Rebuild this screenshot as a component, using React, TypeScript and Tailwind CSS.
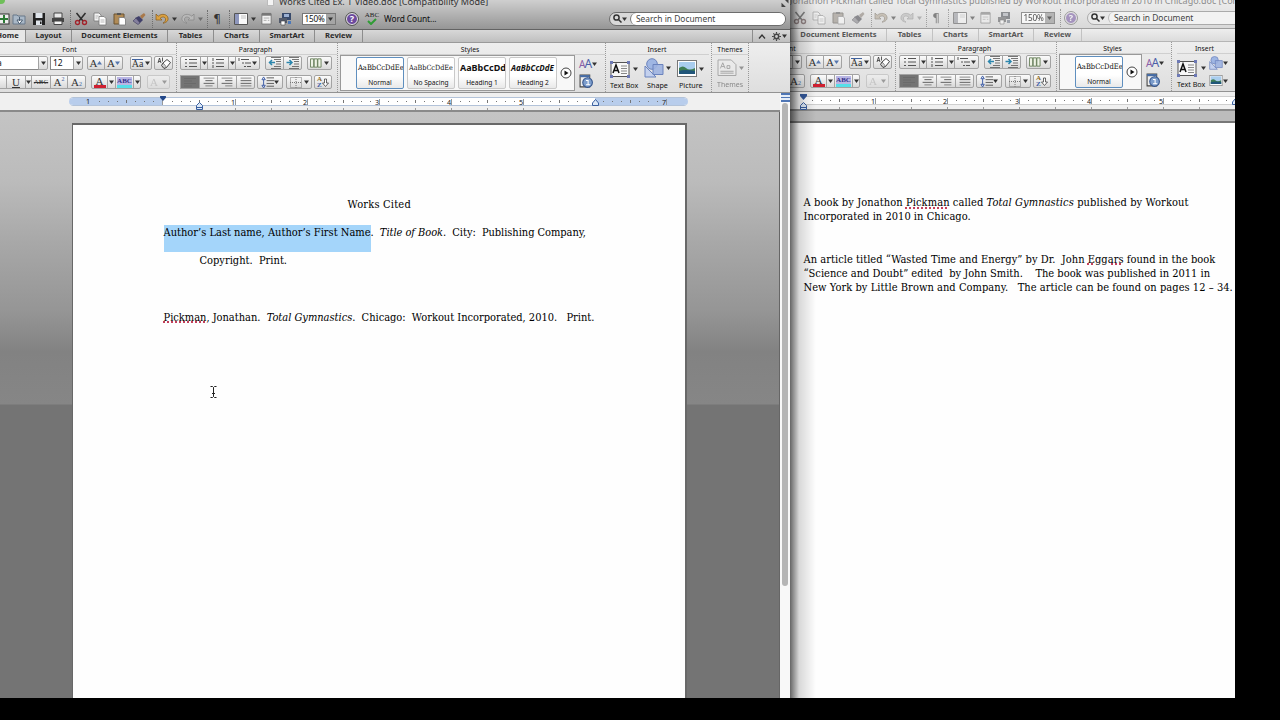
import type { ReactNode } from "react";
import clsx from "clsx";

interface BoxProps {
  className?: string;
  children?: ReactNode;
}

interface WindowProps {
  title: string;
  inactive?: boolean;
  children: ReactNode;
}

function Cell({ className, children }: BoxProps) {
  return (
    <div className={clsx("flex h-full shrink-0 items-center justify-center", className)}>
      {children}
    </div>
  );
}

function Caret({ className }: BoxProps) {
  return (
    <svg viewBox="0 0 5 4" className={clsx("h-[4px] w-[5px] shrink-0 fill-[#333]", className)}>
      <path d="M0 0.5h5L2.5 4z" />
    </svg>
  );
}

function Divider() {
  return <div className="h-[18px] w-0 border-l border-dotted border-[#6f6f6f]" />;
}

function Icon({ size = 14, children }: { size?: number; children: ReactNode }) {
  return (
    <svg viewBox="0 0 14 14" width={size} height={size} fill="none" className="shrink-0">
      {children}
    </svg>
  );
}

/* ---------- toolbar ---------- */

function Toolbar({ inactive }: { inactive?: boolean }) {
  return (
    <div className="flex h-[21px] w-full items-center">
      <div className={clsx("flex h-full items-center", inactive && "opacity-55 grayscale-80")}>
        <Cell className="w-[8px]">
          <Icon>
            <rect x="1" y="2" width="11" height="10" fill="#eee" stroke="#333" />
            <path d="M2 7h9M7 3v8" stroke="#2c7a35" strokeWidth="2" />
          </Icon>
        </Cell>
        <Cell className="w-[22px]">
          <Icon>
            <path d="M1 3h4l1 1h7v8H1z" fill="#a9b8c7" stroke="#68798a" />
            <path d="M7.500 5v4M5 8l2.500 4 3-4z" fill="#fff" stroke="#4c5f73" />
          </Icon>
        </Cell>
        <Cell className="w-[18px]">
          <Icon>
            <path d="M1 1h12v12H1z" fill="#222" />
            <path d="M3.500 1h7v5h-7zM4 8.500h6V13H4z" fill="#dfe4ea" />
            <path d="M8 9.500h1.500V12H8z" fill="#222" />
          </Icon>
        </Cell>
        <Cell className="w-[20px]">
          <Icon>
            <path d="M3 1h8v5H3z" fill="#e8e8e8" stroke="#444" />
            <path d="M1 6h12v4H1z" fill="#444" />
            <path d="M3 9h8v3.500H3z" fill="#f4f4f4" stroke="#444" />
          </Icon>
        </Cell>
        <Cell className="w-[4px]"><Divider /></Cell>
        <Cell className="w-[18px]">
          <Icon>
            <path d="M2.500 1l6.500 8M11.500 1L5 9" stroke="#2d2d2d" strokeWidth="1.500" />
            <circle cx="3.500" cy="10.500" r="2" stroke="#a3232b" strokeWidth="1.400" />
            <circle cx="10.500" cy="10.500" r="2" stroke="#a3232b" strokeWidth="1.400" />
          </Icon>
        </Cell>
        <Cell className="w-[20px]">
          <Icon>
            <path d="M1 1h5l2 2v6H1z" fill="#f4f4f4" stroke="#777" strokeWidth=".8" />
            <path d="M6 4.500h5l2 2V13H6z" fill="#fff" stroke="#777" strokeWidth=".8" />
            <path d="M7.500 8h4M7.500 10h4M2.500 4h3M2.500 6h2" stroke="#999" strokeWidth=".7" />
          </Icon>
        </Cell>
        <Cell className="w-[20px]">
          <Icon>
            <path d="M1 2h10v10H1z" fill="#b08b57" stroke="#6b5230" />
            <path d="M4 1h4v2H4z" fill="#555" />
            <path d="M6 5.500h5l1.500 1.500V13H6z" fill="#fff" stroke="#777" strokeWidth=".8" />
          </Icon>
        </Cell>
        <Cell className="w-[18px]">
          <Icon>
            <path d="M8 4l4-3 1.500 2-3.500 4z" fill="#a9794a" />
            <path d="M3 6l4-2 4 4-3 3z" fill="#41406a" />
            <path d="M1 9l3-3 4 5-2 1.500z" fill="#847f9e" stroke="#3c3a5a" strokeWidth=".6" />
          </Icon>
        </Cell>
        <Cell className="w-[8px]"><Divider /></Cell>
        <Cell className="w-[12px]">
          <Icon>
            <path d="M1 2v6h6L5.200 6.200C8 4 11 5 10.500 8c-.2 1.300-1 2-2.500 3.200 4-.7 5.500-3 5-5.200C12.300 2.200 7 1 3.200 4.200z" fill="#dba13f" stroke="#84591c" strokeWidth=".7" />
          </Icon>
        </Cell>
        <Cell className="w-[12px]"><Caret /></Cell>
        <Cell className="w-[16px]">
          <Icon>
            <path d="M13 2v6H7l1.800-1.800C6 4 3 5 3.500 8c.2 1.300 1 2 2.500 3.200C2 10.500.5 8.200 1 6 1.700 2.200 7 1 10.800 4.200z" fill="#b9b9b9" stroke="#858585" strokeWidth=".7" />
          </Icon>
        </Cell>
        <Cell className="w-[8px]"><Caret className="opacity-50" /></Cell>
        <Cell className="w-[6px]"><Divider /></Cell>
        <Cell className="w-[14px] font-['DejaVu_Sans'] text-[12px] text-[#333]">¶</Cell>
        <Cell className="w-[10px]"><Divider /></Cell>
        <Cell className="w-[14px]">
          <Icon>
            <path d="M.5 1.500h13v11H.5z" fill="#fafafa" stroke="#555" />
            <path d="M1 2h4v10H1z" fill="#8e97bd" />
            <path d="M7 4h5M7 6h5" stroke="#aaa" strokeWidth=".7" />
          </Icon>
        </Cell>
        <Cell className="w-[10px]"><Caret /></Cell>
        <Cell className="w-[16px]">
          <Icon size={13}>
            <path d="M2 2h10v11H2z" fill="#f2f2f2" stroke="#777" />
            <path d="M2 1h10v3H2z" fill="#777" />
            <path d="M4 6.500h6M4 9h3M8.500 9H10" stroke="#aaa" />
          </Icon>
        </Cell>
        <Cell className="w-[22px]">
          <Icon>
            <path d="M4 1h9v7H4z" fill="#384a6b" />
            <path d="M6 2h5v3H6z" fill="#9bb0d2" />
            <path d="M1 6h8v5H1z" fill="#535b6b" />
            <path d="M3 9h4v4H3z" fill="#fff" stroke="#444" strokeWidth=".6" />
            <path d="M10 9h3v3h-3z" fill="#4b79bb" />
          </Icon>
        </Cell>
      </div>

      <div className={clsx("ml-[6px] flex h-[12px] shrink-0 border border-[#777] bg-white", inactive && "opacity-75")}>
        <span className="w-[23px] text-center text-[8.200px] leading-[10px] tracking-[-0.2px] text-[#111]">150%</span>
        <span className="flex w-[9px] items-center justify-center bg-[#a5a5a5]"><Caret /></span>
      </div>
      {inactive && <Cell className="ml-[4px] w-[2px] opacity-60"><Divider /></Cell>}
      <Cell className={clsx(inactive ? "ml-[2px] w-[16px] opacity-50" : "ml-[9px] w-[14px]")}>
        <span className="flex size-[12px] items-center justify-center rounded-full border border-[#eee] bg-[#6c4a9e] text-[9px] leading-none font-bold text-white outline outline-[#555]">
          ?
        </span>
      </Cell>
      {!inactive && (
        <>
          <Cell className="ml-[5px] w-[16px]">
            <div className="flex flex-col items-center">
              <span className="h-[6px] font-['Liberation_Serif'] text-[7px] leading-[6px] text-[#222]">ABC</span>
              <svg viewBox="0 0 10 7" className="h-[7px] w-[10px]">
                <path d="M1 3l3 3 5-5" fill="none" stroke="#2f9c35" strokeWidth="2" />
              </svg>
            </div>
          </Cell>
          <span className="mt-px ml-[4px] text-[8.400px] tracking-[-0.1px] whitespace-nowrap text-[#111]">Word Count...</span>
        </>
      )}
      <div
        className={clsx(
          "flex h-[14px] shrink-0 items-center rounded-full border",
          inactive
            ? "ml-[8px] w-[190px] border-[#aaa] bg-[#e9e9e9]"
            : "mr-[4px] ml-auto w-[177px] border-[#6d6d6d] bg-[#d8d8d8]"
        )}
      >
        <svg viewBox="0 0 9 9" className="ml-[3px] size-[9px]" fill="none" stroke="#333" strokeWidth="1.500">
          <circle cx="3.500" cy="3.500" r="2.600" />
          <path d="M5.500 5.500L8.500 8.500" />
        </svg>
        <Caret />
        <div
          className={clsx(
            "ml-[3px] flex h-[12px] flex-1 items-center rounded-full border-l pt-px pl-[5px] text-[8.400px] whitespace-nowrap",
            inactive ? "border-[#bbb] bg-[#f2f2f2] text-[#444]" : "border-[#777] bg-white text-[#444]"
          )}
        >
          Search in Document
        </div>
      </div>
    </div>
  );
}

/* ---------- tabs ---------- */

function Tabs({ inactive }: { inactive?: boolean }) {
  const tab = clsx(
    "flex h-full shrink-0 items-center justify-center border-r whitespace-nowrap",
    inactive ? "border-[#c2c2c2]" : "border-[#8d8d8d]"
  );

  return (
    <div
      className={clsx(
        "flex h-[13px] shrink-0 items-center border-b text-[7.600px] font-bold",
        inactive
          ? "border-[#b5b5b5] bg-linear-to-b from-[#eee] to-[#dcdcdc] text-[#555]"
          : "border-[#9a9a9a] bg-linear-to-b from-[#d8d8d8] to-[#bfbfbf] text-[#2a2a2a]"
      )}
    >
      <div className={clsx(tab, "w-[26px] bg-[#e7e7e7] pr-[10px]")}>Home</div>
      <div className={clsx(tab, "w-[46px]")}>Layout</div>
      <div className={clsx(tab, "w-[96px]")}>Document Elements</div>
      <div className={clsx(tab, "w-[46px]")}>Tables</div>
      <div className={clsx(tab, "w-[46px]")}>Charts</div>
      <div className={clsx(tab, "w-[55px]")}>SmartArt</div>
      <div className={clsx(tab, "w-[48px]")}>Review</div>
      {!inactive && (
        <div className="ml-auto flex h-full w-[38px] items-center border-l border-[#8d8d8d] pl-[5px]">
          <svg viewBox="0 0 8 5" className="h-[5px] w-[8px]" fill="none" stroke="#333" strokeWidth="1.300">
            <path d="M1 4.500L4 1l3 3.500" />
          </svg>
          <svg viewBox="0 0 10 10" className="ml-[6px] size-[9px]" fill="none" stroke="#444">
            <circle cx="5" cy="5" r="2.400" strokeWidth="1.600" />
            <path d="M5 0v2M5 8v2M0 5h2M8 5h2M1.500 1.500l1.400 1.400M7.100 7.100l1.400 1.400M1.500 8.500l1.400-1.400M7.100 2.900l1.400-1.400" strokeWidth="1.300" />
          </svg>
          <Caret className="ml-px" />
        </div>
      )}
    </div>
  );
}

/* ---------- ribbon ---------- */

function Group({ title, className, titleClass, children }: BoxProps & { title: string; titleClass?: string }) {
  return (
    <div className={clsx("flex h-full shrink-0 flex-col border-r border-dotted border-[#999] pt-px", className)}>
      <div className={clsx("h-[11px] shrink-0 border-b border-[#cfcfcf] text-center text-[6.800px] leading-[12px] text-[#111]", titleClass)}>
        {title}
      </div>
      {children}
    </div>
  );
}

function Btn({ className, children }: BoxProps) {
  return (
    <div
      className={clsx(
        "flex h-[14px] shrink-0 items-center justify-center overflow-hidden border border-[#a3a3a3] bg-linear-to-b from-[#fbfbfb] to-[#d9d9d9] font-['Liberation_Serif'] text-[#333]",
        className
      )}
    >
      {children}
    </div>
  );
}

function Lines({ d, className }: { d: string; className?: string }) {
  return (
    <svg viewBox="0 0 14 10" className={clsx("h-[10px] w-[14px] shrink-0", className)} fill="none" stroke="#555">
      <path d={d} strokeWidth="1" />
    </svg>
  );
}

function FontGroup() {
  return (
    <Group title="Font" className="w-[177px]" titleClass="pr-[37px]">
      <div className="mt-px flex h-[14px]">
        <div className="h-[14px] w-[39px] border border-l-0 border-[#888] bg-white text-[8.500px] leading-[12px]"><span className="-ml-[3px]">a</span></div>
        <Btn className="-ml-px w-[10px] rounded-r-[2px]"><Caret /></Btn>
        <div className="ml-[2px] h-[14px] w-[24px] border border-[#888] bg-white pl-[2px] text-[8.500px] leading-[12px]">12</div>
        <Btn className="-ml-px w-[10px] rounded-r-[2px]"><Caret /></Btn>
        <Btn className="ml-[4px] w-[18px] rounded-l-[2px] text-[11px]">
          A<Caret className="rotate-180 fill-[#5476ae]" />
        </Btn>
        <Btn className="-ml-px w-[19px] rounded-r-[2px] text-[11px]">
          A<Caret className="fill-[#5476ae]" />
        </Btn>
        <Btn className="ml-[7px] w-[22px] rounded-[2px] text-[10px]">
          <span className="mr-[2px] border-t border-[#41639f] leading-[8px]">Aa</span>
          <Caret />
        </Btn>
        <Btn className="ml-[2px] w-[19px] rounded-[2px]">
          <Icon>
            <path d="M6 7l4-3.500 3.500 3-4 5z" fill="#fff" stroke="#444" />
            <path d="M6 7l-1.500 2.500L7 12.500l2.500-1" fill="#ccc" stroke="#444" />
            <path d="M1 7l1.500-5L4 7M1.500 5.500h2M5.500 1.500v4" stroke="#333" strokeWidth=".8" />
          </Icon>
        </Btn>
      </div>
      <div className="mt-[5px] flex h-[14px]">
        <Btn className="w-[7px] border-l-0" />
        <Btn className="-ml-px w-[20px] text-[11px] underline">U</Btn>
        <Btn className="-ml-px w-[7px]"><Caret /></Btn>
        <Btn className="-ml-px w-[20px] text-[7px] line-through">ABC</Btn>
        <Btn className="-ml-px w-[18px] text-[11px]">A<sup className="text-[6px] text-[#41639f]">2</sup></Btn>
        <Btn className="-ml-px w-[19px] rounded-r-[2px] text-[11px]">A<sub className="text-[6px] text-[#41639f]">2</sub></Btn>
        <Btn className="ml-[5px] w-[17px] rounded-l-[2px] text-[11px]">
          <span className="h-[12px] w-[12px] border-b-3 border-[#cf1f30] text-center leading-[10px]">A</span>
        </Btn>
        <Btn className="-ml-px w-[9px]"><Caret /></Btn>
        <Btn className="-ml-px w-[19px] text-[7px] font-bold text-[#33308a]">
          <span className="h-[11px] border-b-3 border-[#56dfe9] bg-[#b9b6e4] leading-[8px]">ABC</span>
        </Btn>
        <Btn className="-ml-px w-[8px] rounded-r-[2px]"><Caret /></Btn>
        <Btn className="ml-[6px] w-[23px] rounded-[2px] text-[11px] opacity-40">
          <span className="mr-[4px] text-[#999]">A</span><Caret />
        </Btn>
      </div>
    </Group>
  );
}

function ParagraphGroup() {
  return (
    <Group title="Paragraph" className="w-[161px] pl-[3px]" titleClass="pr-[6px]">
      <div className="mt-px flex h-[14px]">
        <Btn className="w-[21px] rounded-l-[2px]"><Lines d="M1 1.500h2M5 1.500h8M1 5h2M5 5h8M1 8.500h2M5 8.500h8" /></Btn>
        <Btn className="-ml-px w-[8px]"><Caret /></Btn>
        <Btn className="-ml-px w-[22px]"><Lines d="M2 0v3M5 1.500h8M1 5h2M5 5h8M2 7v3M5 8.500h8" /></Btn>
        <Btn className="-ml-px w-[8px]"><Caret /></Btn>
        <Btn className="-ml-px w-[25px] rounded-r-[2px]">
          <Lines d="M1 0v3M3 1.500h8M4 5h2M7 5h6M6 8.500h2M9 8.500h4" /><Caret />
        </Btn>
        <Btn className="ml-[5px] w-[19px] rounded-l-[2px]">
          <Icon>
            <path d="M6 3.500h7M8 5.500h5M8 8h5M3 12.500h10M6 10.500h7M3 1.500h10" stroke="#666" strokeWidth=".9" />
            <path d="M7 6.500H1.500M4 4L1.500 6.500 4 9" stroke="#2c86ad" strokeWidth="1.500" />
          </Icon>
        </Btn>
        <Btn className="-ml-px w-[19px] rounded-r-[2px]">
          <Icon>
            <path d="M6 3.500h7M8 5.500h5M8 8h5M3 12.500h10M6 10.500h7M3 1.500h10" stroke="#666" strokeWidth=".9" />
            <path d="M.5 6.500H6M3.500 4L6 6.500 3.500 9" stroke="#2c86ad" strokeWidth="1.500" />
          </Icon>
        </Btn>
        <Btn className="ml-[5px] w-[25px] rounded-[2px]">
          <svg viewBox="0 0 13 10" className="mr-[2px] h-[10px] w-[12px]" fill="#eef3e6" stroke="#68805b">
            <path d="M.5.500h3.500v9H.5zM4.500.5h3.500v9H4.500zM8.500.5H12v9H8.500z" />
          </svg>
          <Caret />
        </Btn>
      </div>
      <div className="mt-[5px] flex h-[14px]">
        <Btn className="w-[20px] border-[#666] bg-none bg-[#747474]!"><Lines className="opacity-30" d="M1 1.500h12M1 4h8M1 6.500h12M1 9h8" /></Btn>
        <Btn className="-ml-px w-[19px]"><Lines className="scale-90" d="M1 .5h12M3 3.500h8M1 6.500h12M3 9.500h8" /></Btn>
        <Btn className="-ml-px w-[20px]"><Lines className="scale-90" d="M1 .5h12M5 3.500h8M1 6.500h12M5 9.500h8" /></Btn>
        <Btn className="-ml-px w-[19px] rounded-r-[2px]"><Lines className="scale-90" d="M1 .5h12M1 3.500h12M1 6.500h12M1 9.500h12" /></Btn>
        <Btn className="ml-[2px] w-[26px] rounded-[2px]">
          <Icon size={13}>
            <path d="M6 2h8M6 5h8M6 8h8M6 11h8" stroke="#555" />
            <path d="M1 4l1.800-3 1.800 3zM1 10l1.800 3 1.800-3zM2.800 4v6" stroke="#3a5aa6" />
          </Icon>
          <Caret />
        </Btn>
        <Btn className="ml-[3px] w-[26px] rounded-[2px]">
          <svg viewBox="0 0 12 11" className="mr-[2px] h-[11px] w-[12px]" fill="none" stroke="#777" strokeDasharray="1 1">
            <path d="M.5.500h11v10H.5zM6 0v11M0 5.500h12" />
          </svg>
          <Caret />
        </Btn>
        <Btn className="ml-[2px] w-[18px] rounded-[2px]">
          <span className="flex flex-col text-[7px] leading-[6px] font-bold">
            <span className="text-[#8a6a1e]">A</span>
            <span className="text-[#3a5aa6]">Z</span>
          </span>
          <svg viewBox="0 0 7 9" className="h-[9px] w-[7px]" fill="#fff" stroke="#444" strokeWidth=".8">
            <path d="M2.500 1h2v4h2L3.500 8.500.5 5h2z" />
          </svg>
        </Btn>
      </div>
    </Group>
  );
}

interface StyleItem {
  name: string;
  sample: string;
  sampleClass: string;
}

const styleItems: StyleItem[] = [
  { name: "Normal", sample: "AaBbCcDdEe", sampleClass: "font-['DejaVu_Serif_Condensed','DejaVu_Serif',serif] text-[7.500px] [font-stretch:condensed]" },
  { name: "No Spacing", sample: "AaBbCcDdEe", sampleClass: "font-['DejaVu_Serif_Condensed','DejaVu_Serif',serif] text-[7.200px] [font-stretch:condensed]" },
  { name: "Heading 1", sample: "AaBbCcDd", sampleClass: "font-bold text-[9px]" },
  { name: "Heading 2", sample: "AaBbCcDdE", sampleClass: "font-bold italic text-[8px]" },
];

function StylesGroup({ inactive }: { inactive?: boolean }) {
  const items = inactive ? styleItems.slice(0, 1) : styleItems;
  return (
    <Group title="Styles" className={clsx("pl-[2px]", inactive ? "w-[115px]" : "w-[268px]")} titleClass="pr-[5px]">
      <div className="flex">
        <div
          className={clsx(
            "flex h-[36px] shrink-0 items-center gap-[3px] border border-[#999] bg-[#f8f8f8] pl-[15px]",
            inactive ? "w-[83px]" : "w-[235px]"
          )}
        >
          {items.map((item, i) => (
            <div
              key={item.name}
              className={clsx(
                "flex h-[32px] w-[48px] shrink-0 flex-col overflow-hidden rounded-[2px] border bg-linear-to-b from-white from-60% to-[#e9e9e9]",
                i === 0 ? "border-[#5f8fbf]" : "border-[#c9c9c9]"
              )}
            >
              <span className={clsx("h-[20px] overflow-hidden pl-px leading-[20px] whitespace-nowrap text-[#111]", item.sampleClass)}>
                {item.sample}
              </span>
              <span className="text-center text-[6.600px] leading-[11px] whitespace-nowrap text-[#111]">{item.name}</span>
            </div>
          ))}
          <svg viewBox="0 0 12 12" className="size-[12px]" fill="#fff" stroke="#444">
            <circle cx="6" cy="6" r="5" />
            <path d="M4.500 3.500L8.500 6l-4 2.500z" fill="#111" stroke="none" />
          </svg>
        </div>
        <div className="flex flex-col gap-[3px] pt-[2px] pl-[4px]">
          <div className="flex h-[14px] w-[20px] items-center text-[#4b5fa8]">
            <span className="text-[10px] leading-none text-[#8a5fa5]">A</span>
            <span className="-ml-px text-[12px] leading-none">A</span>
            <Caret />
          </div>
          <Icon size={15}>
            <path d="M1 1h9v11H1z" fill="#eee" stroke="#444" />
            <path d="M1 1h9v2H1z" fill="#456ba5" />
            <circle cx="8" cy="8" r="4.500" fill="#7c9dcc" stroke="#34548c" />
            <path d="M6.500 6h2v4M6.500 10h4" stroke="#fff" />
          </Icon>
        </div>
      </div>
    </Group>
  );
}

function TextBoxIcon() {
  return (
    <svg viewBox="0 0 20 17" className="h-[17px] w-[20px] shrink-0">
      <rect x="1" y="1.500" width="18" height="14" fill="#f8f8f8" stroke="#555" />
      <path d="M3 12L6 4l3 8M4 9.500h4" fill="none" stroke="#111" strokeWidth="1.500" />
      <path d="M11 5h6M11 7.500h6M11 10h6M11 12.500h6" stroke="#888" />
      <path d="M0 0h3v3H0zM17 0h3v3h-3zM0 14h3v3H0zM17 14h3v3h-3z" fill="#6d79b5" />
    </svg>
  );
}

function ShapeIcon({ className }: BoxProps) {
  return (
    <svg viewBox="0 0 20 20" className={clsx("shrink-0", className)} stroke="#6b83bd">
      <circle cx="8" cy="6" r="5.300" fill="#9fb6e3" />
      <path d="M1 8v11h11z" fill="#c4d1ee" />
      <path d="M9 6.500h10v10H9z" fill="#9db3e0" fillOpacity=".9" />
    </svg>
  );
}

function PictureIcon({ className }: BoxProps) {
  return (
    <svg viewBox="0 0 20 17" className={clsx("shrink-0", className)}>
      <rect x=".5" y=".5" width="19" height="16" fill="#fff" stroke="#777" />
      <rect x="2" y="2" width="16" height="12" fill="#a9cdee" />
      <path d="M2 8q4-3 7 0t9 0v6H2z" fill="#3f7d54" />
      <path d="M2 11q6-2 16 0v3H2z" fill="#21567a" />
    </svg>
  );
}

function InsertGroup() {
  return (
    <Group title="Insert" className="w-[106px] pr-[2px] pl-[4px]" titleClass="pr-[5px]">
      <div className="flex text-[7.200px] leading-[10px]">
        <div className="flex w-[34px] flex-col">
          <div className="flex h-[25px] items-center gap-[3px] pt-[3px]"><TextBoxIcon /><Caret /></div>
          <span className="whitespace-nowrap">Text Box</span>
        </div>
        <div className="flex w-[33px] flex-col">
          <div className="flex h-[25px] items-center gap-[2px] pt-px"><ShapeIcon className="size-[20px]" /><Caret /></div>
          <span className="pl-[3px]">Shape</span>
        </div>
        <div className="flex flex-col">
          <div className="flex h-[25px] items-center gap-[2px] pt-[2px]"><PictureIcon className="h-[17px] w-[20px]" /><Caret /></div>
          <span className="pl-[2px]">Picture</span>
        </div>
      </div>
    </Group>
  );
}

function CompactInsertGroup() {
  return (
    <Group title="Insert" className="w-[64px] pl-[5px]" titleClass="pr-[3px]">
      <div className="flex text-[7.200px] leading-[10px]">
        <div className="flex w-[32px] flex-col">
          <div className="flex h-[25px] items-center gap-[4px] pt-[3px]"><TextBoxIcon /><Caret /></div>
          <span className="whitespace-nowrap">Text Box</span>
        </div>
        <div className="flex flex-col gap-[4px] pt-px">
          <div className="flex h-[15px] items-center"><ShapeIcon className="size-[14px]" /><Caret /></div>
          <div className="flex h-[13px] items-center"><PictureIcon className="h-[11px] w-[14px]" /><Caret /></div>
        </div>
      </div>
    </Group>
  );
}

function Ribbon({ inactive }: { inactive?: boolean }) {
  return (
    <div className="flex h-[50px] shrink-0 border-b border-[#929292] bg-linear-to-b from-[#eee] to-[#dedede] text-[#111]">
      <FontGroup />
      <ParagraphGroup />
      <StylesGroup inactive={inactive} />
      {inactive ? (
        <CompactInsertGroup />
      ) : (
        <>
          <InsertGroup />
          <Group title="Themes" className="w-[37px]">
            <div className="flex flex-col items-center opacity-45">
              <div className="flex h-[25px] items-center gap-[2px]">
                <svg viewBox="0 0 20 18" className="h-[17px] w-[20px]" fill="#eee" stroke="#555">
                  <path d="M.5 1h14l5 5v11.500H.5z" />
                  <path d="M3 10l2.500-6L8 10M4 8h3M10 10V7h3v3zM3 13h14M3 15h14" fill="none" />
                </svg>
                <Caret />
              </div>
              <span className="text-[7px] leading-[10px]">Themes</span>
            </div>
          </Group>
        </>
      )}
    </div>
  );
}

/* ---------- ruler ---------- */

function Inch({ label }: { label?: number }) {
  return (
    <div className="flex h-full w-[72px] shrink-0 items-center">
      {[1, 2, 3, 4, 5, 6, 7].map((n) => (
        <span key={n} className="flex w-[9px] justify-end">
          <i className={clsx("w-px bg-[#777]", n === 4 ? "h-[3px]" : "h-[1.500px]")} />
        </span>
      ))}
      <span className="flex h-[6px] w-[9px] justify-end border-r border-[#999] text-[7.200px] leading-[7px] text-[#222]">{label}</span>
    </div>
  );
}

function TabStops({ count, className }: { count: number; className?: string }) {
  return (
    <div className={clsx("mt-[2px] flex h-[2px]", className)}>
      {Array.from({ length: count }, (_, i) => (
        <span key={i} className="flex w-[36px] shrink-0 justify-end"><i className="h-[2px] w-px bg-[#999]" /></span>
      ))}
    </div>
  );
}

function Marker() {
  return (
    <svg viewBox="0 0 7 8" className="h-[8px] w-[7px]" fill="#dce8f7" stroke="#3a5f9f">
      <path d="M3.500.5L6.500 3.500v4h-6v-4zM.5 5.500h6" />
    </svg>
  );
}

function Ruler({ inactive }: { inactive?: boolean }) {
  return (
    <div className="relative flex h-[19px] shrink-0 flex-col border-b-2 border-[#8a8a8a] bg-[#f0f0f0] pt-[4px]">
      {inactive ? (
        <>
          <div className="ml-[84px] flex h-[9px] border-y border-[#cfcfcf] bg-white pl-px">
            {[1, 2, 3, 4, 5].map((n) => <Inch key={n} label={n} />)}
            <Inch />
          </div>
          <TabStops className="ml-[85px]" count={11} />
        </>
      ) : (
        <>
          <div className="ml-[69px] flex h-[9px] w-[619px] overflow-hidden rounded-full border-y border-[#b3c3d9] bg-white">
            <div className="flex h-full w-[94px] shrink-0 justify-end bg-[#b8cdec]">
              <Inch />
            </div>
            <div className="flex h-full w-[432px] shrink-0 pl-px">
              {[1, 2, 3, 4, 5].map((n) => <Inch key={n} label={n} />)}
              <Inch />
            </div>
            <div className="flex h-full flex-1 overflow-hidden bg-[#b8cdec]">
              <Inch label={7} />
            </div>
          </div>
          <TabStops className="ml-[200px]" count={10} />
        </>
      )}
      {inactive ? (
        <div className="absolute top-[2px] left-[81px] flex flex-col gap-[2px]">
          <svg viewBox="0 0 7 6" className="h-[6px] w-[7px] fill-[#34599b]"><path d="M0 0h7v2L3.500 6 0 2z" /></svg>
          <Marker />
        </div>
      ) : (
        <>
          <span className="absolute top-[4px] left-[86px] text-[7.200px] leading-[9px] text-[#222]">1</span>
          <svg viewBox="0 0 7 6" className="absolute top-[3px] left-[160px] h-[5px] w-[6px] fill-[#234889]"><path d="M0 0h7v2L3.500 6 0 2z" /></svg>
          <div className="absolute top-[9px] left-[196px]"><Marker /></div>
        </>
      )}
      <svg viewBox="0 0 7 7" className={clsx("absolute top-[6px] size-[7px]", inactive ? "left-[513px]" : "left-[592px]")} fill="#dce8f7" stroke="#3a5f9f">
        <path d="M3.500.5L6.500 4v2.500h-6V4z" />
      </svg>
    </div>
  );
}

/* ---------- windows ---------- */

function WordWindow({ title, inactive, children }: WindowProps) {
  return (
    <div className="flex h-full w-full flex-col">
      <div
        className={clsx(
          "flex h-[30px] shrink-0 flex-col overflow-hidden border-b",
          inactive
            ? "border-[#9d9d9d] bg-linear-to-b from-[#eee] to-[#d9d9d9]"
            : "border-[#636363] bg-linear-to-b from-[#cfcfcf] to-[#969696]"
        )}
      >
        <div className="flex h-[8px] shrink-0 items-start">
          {inactive ? (
            <span className="-mt-[5px] pl-[71px] text-[8.970px] leading-[13px] whitespace-nowrap text-[#8b8b8b]">{title}</span>
          ) : (
            <>
              <i className="h-[4px] w-[5px] rounded-br-full bg-[#6fbf5a]" />
              <i className="ml-[262px] h-[6px] w-[7px] border border-t-0 border-[#bbb] bg-[#f4f4f4]" />
              <span className="-mt-[5px] ml-[5px] text-[9.080px] leading-[13px] whitespace-nowrap text-[#333]">{title}</span>
              <svg viewBox="0 0 8 8" className="mr-[1px] ml-auto h-[7px] w-[8px]" fill="#444">
                <path d="M0 8V3l5 5zM8 0v4L4 0z" />
              </svg>
            </>
          )}
        </div>
        <Toolbar inactive={inactive} />
      </div>
      <Tabs inactive={inactive} />
      <Ribbon inactive={inactive} />
      <Ruler inactive={inactive} />
      {children}
    </div>
  );
}

function Misspelled({ children }: { children: ReactNode }) {
  return <span className="underline decoration-[#c2405c] decoration-dotted decoration-2 underline-offset-1">{children}</span>;
}

function WorksCitedPage() {
  return (
    <div className="flex min-h-0 flex-1">
      <div className="flex flex-1 border-r border-[#666] bg-[linear-gradient(#c4c4c4_0px,#bbbbbb_70px,#a8a8a8_130px,#959595_200px,#828282_240px,#868686_292px,#747474_293px)] pt-[11px] pl-[72px]">
        <div className="w-[615px] border-t-2 border-r-2 border-l border-[#686868] bg-[#fefefe] pt-[71.500px] pl-[90.500px] font-['DejaVu_Serif_Condensed','DejaVu_Serif',serif] text-[11px] leading-[15px] whitespace-pre text-black [font-stretch:condensed]">
          <p className="h-[28.300px] pl-[184px] tracking-[0.2px]">Works Cited</p>
          <p className="flex h-[28.300px]">
            <span className="h-[27px] bg-[#a4d5fa]">Author’s Last name, Author’s First Name</span>
            <span className="tracking-[-0.05px]">.  <em>Title of Book</em>.  City:  Publishing Company,</span>
          </p>
          <p className="h-[28.300px] pl-[36px]">Copyright.  Print.</p>
          <p className="h-[28.300px]" />
          <p className="h-[28.300px] tracking-[-0.02px]">
            <Misspelled>Pickman</Misspelled>, Jonathan.  <em>Total Gymnastics</em>.  Chicago:  Workout Incorporated, 2010.   Print.
          </p>
          <svg viewBox="0 0 7 12" className="mt-[48px] ml-[46px] h-[12px] w-[7px]" fill="none" stroke="#222">
            <path d="M.5.500h2l1 1 1-1h2M3.500 1.500v9M.5 11.500h2l1-1 1 1h2M2 7.500h3" />
          </svg>
        </div>
      </div>
      <div className="w-[10px] shrink-0 bg-[#f8f8f8]">
        <div className="ml-[2px] h-[474px] w-[6px] rounded-b-full bg-[#b5b5b5]" />
      </div>
    </div>
  );
}

function SourcesPage() {
  return (
    <div className="flex min-h-0 flex-1 flex-col bg-[#bcbcbc] pt-[10px]">
      <div className="flex-1 border-t-2 border-[#777] bg-[#fefefe] pt-[73px] pl-[84.500px] font-['DejaVu_Serif_Condensed','DejaVu_Serif',serif] text-[11px] leading-[14.200px] whitespace-pre text-black [font-stretch:condensed]">
        <p className="tracking-[0.09px]">A book by Jonathon <Misspelled>Pickman</Misspelled> called <em>Total Gymnastics</em> published by Workout</p>
        <p className="tracking-[0.03px]">Incorporated in 2010 in Chicago.</p>
        <p className="mt-[28.400px] tracking-[0.03px]">An article titled “Wasted Time and Energy” by Dr.  John <Misspelled>Eggars</Misspelled> found in the book</p>
        <p>“Science and Doubt” edited  by John Smith.    The book was published in 2011 in</p>
        <p className="tracking-[0.045px]">New York by Little Brown and Company.   The article can be found on pages 12 – 34.</p>
      </div>
    </div>
  );
}

function App() {
  return (
    <div className="h-[720px] w-[1280px] overflow-hidden bg-black font-['Noto_Sans',sans-serif]">
      <div className="flex h-[698px] w-[1235px] overflow-hidden">
        <div className="relative z-10 h-full w-[790px] shrink-0">
          <WordWindow title="Works Cited Ex. 1 Video.doc [Compatibility Mode]">
            <WorksCitedPage />
          </WordWindow>
          {/* split handle and top of the scroll bar */}
          <div className="absolute top-[93px] right-0 flex h-[19px] w-[10px] flex-col items-center bg-[#f8f8f8]">
            <i className="h-[9px] w-[9px] border-y-2 border-[#4f76b5] bg-[linear-gradient(#e5edf8_2px,#4f76b5_2px,#4f76b5_3px,#e5edf8_3px)]" />
            <i className="mt-px w-[6px] flex-1 rounded-t-full bg-[#b5b5b5]" />
          </div>
          {/* window shadow */}
          <div className="absolute top-0 left-full h-full w-[26px] bg-linear-to-r from-black/60 via-black/15 via-35% to-transparent" />
        </div>
        <div className="h-full flex-1 overflow-hidden">
          <div className="-mt-px -ml-[71px] h-[699px] w-[516px]">
            <WordWindow
              inactive
              title="Jonathon Pickman called Total Gymnastics published by Workout Incorporated in 2010 in Chicago.doc [Compatibility Mode]"
            >
              <SourcesPage />
            </WordWindow>
          </div>
        </div>
      </div>
    </div>
  );
}

export default App;
